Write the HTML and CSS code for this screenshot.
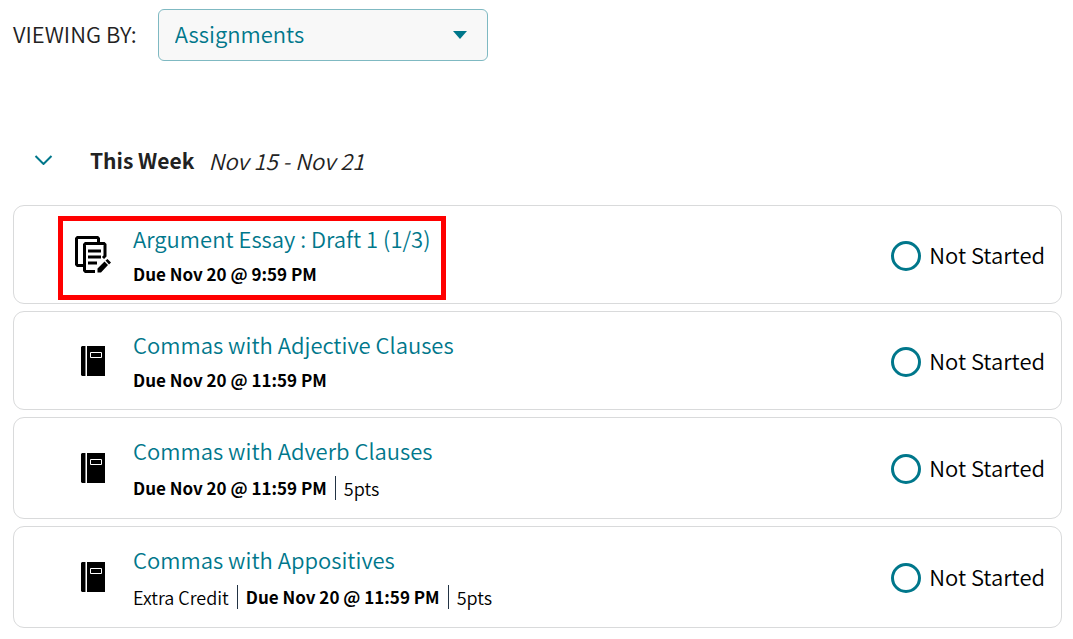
FILE: index.html
```html
<!DOCTYPE html>
<html lang="en">
<head>
<meta charset="utf-8">
<meta name="viewport" content="width=device-width, initial-scale=1">
<title>Assignments</title>
<link rel="stylesheet" href="styles.css">
</head>
<body>
<svg class="symbols" aria-hidden="true">
  <symbol id="book" viewBox="0 0 24 30">
    <path d="M1 0h3v30H1l-1-1V1z"/><path d="M6 0h18v30H6z"/><path class="book-spine" d="M4 0h1v30H4z"/>
    <path class="book-label" d="M9.500 6.500h11v5h-11z"/>
  </symbol>
</svg>
<main class="page">
  <div class="filter">
    <label class="filter-label" for="view">VIEWING BY:</label>
    <div class="filter-control">
      <select class="filter-select" id="view"><option>Assignments</option></select>
      <svg class="filter-arrow" viewBox="0 0 14 8" aria-hidden="true"><path d="M0 0h14L7 8z"/></svg>
    </div>
  </div>

  <section class="week">
    <header class="week-header">
      <button class="toggle" type="button" aria-label="Collapse this week" aria-expanded="true">
        <svg class="chevron" viewBox="0 0 18 10" aria-hidden="true"><path d="M1 1l8 8 8-8"/></svg>
      </button>
      <h2 class="week-title">This Week</h2>
      <span class="week-range">Nov 15 - Nov 21</span>
    </header>

    <ul class="list">
      <li class="card highlighted">
        <div class="card-icon">
          <svg class="essay-icon" viewBox="0 0 36 37" aria-hidden="true">
            <path class="essay-line" d="M8 29.500H2.500l-1-1V2.500l1-1h20l1 1V6"/>
            <path class="essay-line" d="M20 35.500h-9.500l-1-1V8.500l1-1H29l1 1V20l-2 2"/>
            <path class="essay-rule" d="M13 15h13M13 21h13M13 27h9"/>
            <path d="M22.500 36.500v-4l7-7 3.500 3.500-7 7.500zM30.500 24.500l2-1.500 3.500 3.500-2 2z"/>
          </svg>
        </div>
        <div class="details">
          <a class="title" href="#">Argument Essay : Draft 1 (1/3)</a>
          <div class="meta"><strong class="due">Due Nov 20 @ 9:59 PM</strong></div>
        </div>
        <div class="status"><span class="ring"></span>Not Started</div>
      </li>
      <li class="card">
        <div class="card-icon"><svg class="book-icon" aria-hidden="true"><use href="#book"/></svg></div>
        <div class="details">
          <a class="title" href="#">Commas with Adjective Clauses</a>
          <div class="meta"><strong class="due">Due Nov 20 @ 11:59 PM</strong></div>
        </div>
        <div class="status"><span class="ring"></span>Not Started</div>
      </li>
      <li class="card">
        <div class="card-icon"><svg class="book-icon" aria-hidden="true"><use href="#book"/></svg></div>
        <div class="details">
          <a class="title" href="#">Commas with Adverb Clauses</a>
          <div class="meta meta-divided"><strong class="due">Due Nov 20 @ 11:59 PM</strong><span class="extra">5pts</span></div>
        </div>
        <div class="status"><span class="ring"></span>Not Started</div>
      </li>
      <li class="card">
        <div class="card-icon"><svg class="book-icon" aria-hidden="true"><use href="#book"/></svg></div>
        <div class="details">
          <a class="title" href="#">Commas with Appositives</a>
          <div class="meta meta-divided"><span class="extra">Extra Credit</span><strong class="due">Due Nov 20 @ 11:59 PM</strong><span class="extra">5pts</span></div>
        </div>
        <div class="status"><span class="ring"></span>Not Started</div>
      </li>
    </ul>
  </section>
</main>
</body>
</html>
```
FILE: styles.css
```css
*, *::after { box-sizing: border-box; }
body {
  margin: 0;
  background: #fff;
  color: #000;
  font-family: "Noto Sans CJK JP", "Noto Sans", sans-serif;
  font-size: 22px;
  font-weight: 350;
  line-height: 30px;
}
.symbols { position: absolute; width: 0; height: 0; }
.page { padding: 9px 11px 10px 13px; }

.filter { display: flex; align-items: center; gap: 21px; }
.filter-label { padding-bottom: 4px; color: #222; }
.filter-control { display: grid; align-items: center; width: 330px; }
.filter-select {
  grid-area: 1 / 1;
  width: 100%;
  height: 52px;
  padding: 0 40px 4px 16px;
  border: 1px solid #7fb9c2;
  border-radius: 6px;
  background: #f8f8f8;
  color: #00778b;
  font: inherit;
  appearance: none;
}
.filter-arrow {
  grid-area: 1 / 1;
  justify-self: end;
  width: 14px;
  height: 8px;
  margin-right: 21px;
  fill: #00778b;
  pointer-events: none;
}

.week { margin-top: 84px; }
.week-header { display: flex; align-items: center; padding-left: 21px; color: #222; }
.toggle {
  display: flex;
  padding: 0;
  margin-right: 37px;
  border: 0;
  background: none;
}
.chevron { width: 19px; height: 10px; fill: none; stroke: #00778b; stroke-width: 2; }
.week-title { margin: 0 14px 0 0; font-size: 21px; font-weight: 700; }
.week-range { font-style: italic; }

.list {
  display: flex;
  flex-direction: column;
  gap: 7px;
  margin: 30px 0 0;
  padding: 0;
  list-style: none;
}
.card {
  position: relative;
  display: flex;
  align-items: center;
  padding: 17px 16px 15px 59px;
  border: 1px solid #d9dadb;
  border-radius: 11px;
}
.highlighted::after {
  content: "";
  position: absolute;
  top: 10px;
  left: 44px;
  width: 388px;
  height: 84px;
  border: 5px solid #f00;
  pointer-events: none;
}
.card-icon { display: flex; justify-content: center; width: 40px; margin-right: 20px; padding-bottom: 2px; }
.essay-icon { width: 36px; height: 37px; }
.essay-line { fill: none; stroke: #000; stroke-width: 3; }
.essay-rule { stroke: #000; stroke-width: 3; }
.book-icon { width: 24px; height: 30px; }
.book-spine { fill: #888; }
.book-label { fill: none; stroke: #fff; stroke-width: 1; }
.details { display: flex; flex: 1; flex-direction: column; align-items: flex-start; gap: 7px; }
.title { color: #00778b; text-decoration: none; }
.meta { display: flex; align-items: center; min-height: 28px; font-size: 18px; line-height: 24px; }
.meta-divided { min-height: 31px; }
.meta > * + * { margin-left: 8px; padding-left: 8px; border-left: 1px solid #234; }
.due { font-size: 17px; font-weight: 700; }
.extra { font-weight: 350; }
.status { display: flex; align-items: flex-start; gap: 8px; line-height: 26px; }
.ring { width: 30px; height: 30px; border: 3px solid #00778b; border-radius: 50%; }
```
